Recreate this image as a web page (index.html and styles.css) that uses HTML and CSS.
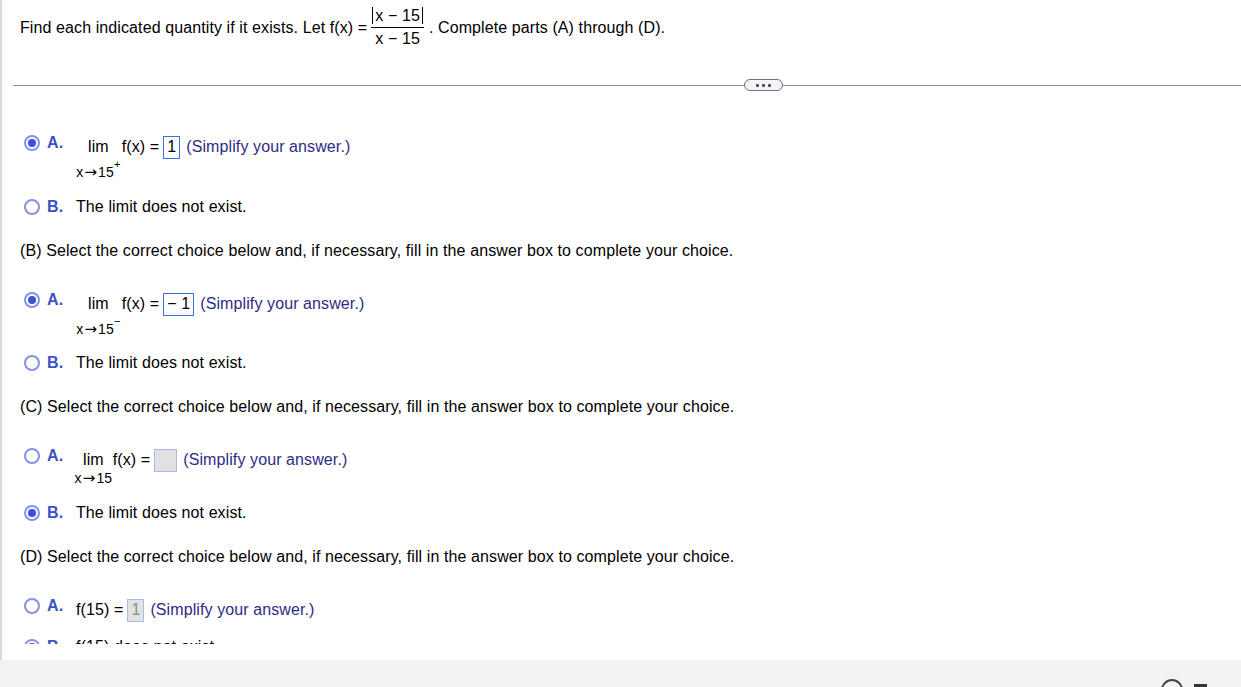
FILE: index.html
```html
<!DOCTYPE html>
<html>
<head>
<meta charset="utf-8">
<link rel="stylesheet" href="styles.css">
</head>
<body>
<div class="page">
  <div class="main">
    <div class="header">
      <span class="htext">Find each indicated quantity if it exists. Let f(x) =</span>
      <span class="frac">
        <span class="num"><span class="abs">x − 15</span></span>
        <span class="den">x − 15</span>
      </span>
      <span class="htext">. Complete parts (A) through (D).</span>
    </div>
    <div class="divider">
      <span class="line-left"></span>
      <span class="pill"><i></i><i></i><i></i></span>
      <span class="line-right"></span>
    </div>
    <div class="scroll">
      <div class="option">
        <span class="radio checked"></span>
        <span class="letter">A.</span>
        <div class="expr wide">
          <div class="limit"><span class="lim">lim</span><span class="sub">x<span class="arrow">→</span>15<sup>+</sup></span></div>
          <div class="eq"><span>f(x) =</span><span class="box">1</span><span class="hint">(Simplify your answer.)</span></div>
        </div>
      </div>
      <div class="option gap-row">
        <span class="radio"></span>
        <span class="letter">B.</span>
        <span class="text">The limit does not exist.</span>
      </div>
      <div class="title gap-title">(B) Select the correct choice below and, if necessary, fill in the answer box to complete your choice.</div>
      <div class="option gap-after-title">
        <span class="radio checked"></span>
        <span class="letter">A.</span>
        <div class="expr wide">
          <div class="limit"><span class="lim">lim</span><span class="sub">x<span class="arrow">→</span>15<sup>−</sup></span></div>
          <div class="eq"><span>f(x) =</span><span class="box">− 1</span><span class="hint">(Simplify your answer.)</span></div>
        </div>
      </div>
      <div class="option gap-row-tight">
        <span class="radio"></span>
        <span class="letter">B.</span>
        <span class="text">The limit does not exist.</span>
      </div>
      <div class="title gap-title">(C) Select the correct choice below and, if necessary, fill in the answer box to complete your choice.</div>
      <div class="option gap-after-title">
        <span class="radio"></span>
        <span class="letter">A.</span>
        <div class="expr tight">
          <div class="limit"><span class="lim">lim</span><span class="sub">x<span class="arrow">→</span>15</span></div>
          <div class="eq"><span>f(x) =</span><span class="box empty"></span><span class="hint">(Simplify your answer.)</span></div>
        </div>
      </div>
      <div class="option gap-row">
        <span class="radio checked"></span>
        <span class="letter">B.</span>
        <span class="text">The limit does not exist.</span>
      </div>
      <div class="title gap-title">(D) Select the correct choice below and, if necessary, fill in the answer box to complete your choice.</div>
      <div class="option gap-after-title">
        <span class="radio"></span>
        <span class="letter">A.</span>
        <div class="expr plain">
          <div class="eq"><span>f(15) =</span><span class="box disabled">1</span><span class="hint">(Simplify your answer.)</span></div>
        </div>
      </div>
      <div class="option gap-last">
        <span class="radio checked"></span>
        <span class="letter">B.</span>
        <span class="text">f(15) does not exist.</span>
      </div>
    </div>
  </div>
  <div class="footer">
    <span class="f-icon"></span>
    <span class="f-bar"></span>
  </div>
</div>
</body>
</html>
```

FILE: styles.css
```css
html, body {
  margin: 0;
  padding: 0;
  background: #fff;
}
body {
  font-family: "Liberation Sans", Arial, sans-serif;
  font-size: 16px;
  letter-spacing: 0.1px;
  color: #000;
}
.page {
  width: 1241px;
  height: 687px;
  display: flex;
  flex-direction: column;
  overflow: hidden;
}
.main {
  height: 660px;
  flex: none;
  border-left: 2px solid #d6dae3;
  box-sizing: border-box;
  overflow: hidden;
  display: flex;
  flex-direction: column;
}
.header {
  display: flex;
  align-items: flex-start;
  padding: 7px 0 0 18px;
  height: 40px;
}
.htext {
  line-height: 18px;
  margin-top: 12px;
  white-space: pre;
}
.frac {
  display: inline-flex;
  flex-direction: column;
  align-items: center;
  margin: 0 5px 0 4px;
}
.num {
  line-height: 18px;
  padding: 0 1px 2px;
  border-bottom: 1px solid #000;
}
.abs {
  display: inline-block;
  line-height: 17px;
  border-left: 1px solid #000;
  border-right: 1px solid #000;
  padding: 0 2px;
}
.den {
  line-height: 18px;
  padding-top: 2px;
}
.divider {
  display: flex;
  align-items: center;
  margin-top: 32px;
  padding-left: 11px;
  height: 12px;
  flex: none;
}
.line-left {
  width: 731px;
  height: 1px;
  background: #8a8e98;
}
.line-right {
  flex: 1;
  height: 1px;
  background: #8a8e98;
}
.pill {
  width: 39px;
  height: 12px;
  box-sizing: border-box;
  border: 1px solid #6b7282;
  border-radius: 6px;
  background: #f3f4f6;
  display: flex;
  align-items: center;
  justify-content: center;
  gap: 3px;
}
.pill i {
  width: 3px;
  height: 3px;
  background: #4a4f5c;
  border-radius: 1px;
}
.scroll {
  height: 553px;
  flex: none;
  overflow: hidden;
  padding: 43px 0 0 18px;
  box-sizing: border-box;
}
.option {
  display: flex;
  align-items: flex-start;
  padding-left: 4px;
}
.radio {
  width: 16px;
  height: 16px;
  flex: none;
  box-sizing: border-box;
  border: 2px solid #8492e2;
  border-radius: 50%;
  margin-top: 1px;
  background: #fff;
  display: flex;
  align-items: center;
  justify-content: center;
}
.radio.checked::after {
  content: "";
  width: 8px;
  height: 8px;
  border-radius: 50%;
  background: #3d50d6;
}
.letter {
  width: 29px;
  margin-left: 7px;
  flex: none;
  font-weight: bold;
  color: #3b52c4;
  line-height: 18px;
}
.text {
  line-height: 18px;
}
.title {
  line-height: 18px;
}
.gap-row { margin-top: 19px; }
.gap-row-tight { margin-top: 18px; }
.gap-title { margin-top: 26px; }
.gap-after-title { margin-top: 31px; }
.gap-last { margin-top: 17px; }
.expr {
  display: flex;
  align-items: flex-start;
  margin-top: 2px;
}
.expr.wide { margin-left: 12px; gap: 13px; }
.expr.tight { margin-left: 7px; gap: 9px; }
.expr.tight .sub { margin-top: 0; }
.limit {
  display: flex;
  flex-direction: column;
  align-items: center;
}
.lim {
  line-height: 22px;
}
.sub {
  width: 0;
  display: flex;
  justify-content: center;
  align-items: baseline;
  white-space: nowrap;
  font-size: 14px;
  line-height: 14px;
  margin-top: 7px;
}
.arrow {
  font-family: "DejaVu Sans", sans-serif;
  font-size: 15px;
  margin: 0 1px;
}
.sub sup {
  font-size: 11px;
  line-height: 0;
  position: relative;
  top: -1px;
  vertical-align: super;
  align-self: flex-start;
}
.eq {
  display: flex;
  align-items: center;
  height: 22px;
  white-space: nowrap;
}
.box {
  display: inline-flex;
  align-items: center;
  justify-content: center;
  height: 23px;
  box-sizing: border-box;
  padding: 0 3px;
  border: 1px solid #3f6fd8;
  margin: 0 6px 0 4px;
  min-width: 16px;
}
.box.empty {
  width: 23px;
  background: #e1e1e1;
  border-color: #a9bbea;
}
.box.disabled {
  background: #e3e3e3;
  border-color: #a9bbea;
  color: #8c8c8c;
}
.hint {
  color: #2e2c86;
}
.footer {
  height: 27px;
  flex: none;
  background: #f2f2f2;
  display: flex;
  align-items: flex-start;
  justify-content: flex-end;
  padding-right: 34px;
  overflow: hidden;
  gap: 11px;
}
.f-icon {
  width: 22px;
  height: 22px;
  box-sizing: border-box;
  border: 2px solid #444;
  border-radius: 50%;
  margin-top: 19px;
}
.f-bar {
  width: 13px;
  height: 3px;
  background: #333;
  margin-top: 24px;
}
```
